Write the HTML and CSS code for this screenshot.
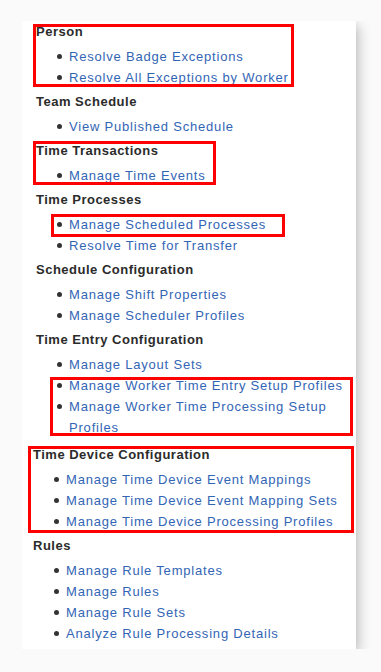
FILE: index.html
```html
<!DOCTYPE html>
<html lang="en">
<head>
<meta charset="utf-8">
<title>Time and Labor Tasks</title>
<link rel="stylesheet" href="styles.css">
</head>
<body>
<div class="card">
  <section class="grp box box-person">
    <h3 class="hd">Person</h3>
    <ul class="items">
      <li><a href="#">Resolve Badge Exceptions</a></li>
      <li><a href="#">Resolve All Exceptions by Worker</a></li>
    </ul>
  </section>
  <section class="grp">
    <h3 class="hd">Team Schedule</h3>
    <ul class="items">
      <li><a href="#">View Published Schedule</a></li>
    </ul>
  </section>
  <section class="grp box box-trans">
    <h3 class="hd">Time Transactions</h3>
    <ul class="items">
      <li><a href="#">Manage Time Events</a></li>
    </ul>
  </section>
  <section class="grp">
    <h3 class="hd">Time Processes</h3>
    <ul class="items">
      <li class="box box-sched"><a href="#">Manage Scheduled Processes</a></li>
      <li><a href="#">Resolve Time for Transfer</a></li>
    </ul>
  </section>
  <section class="grp">
    <h3 class="hd">Schedule Configuration</h3>
    <ul class="items">
      <li><a href="#">Manage Shift Properties</a></li>
      <li><a href="#">Manage Scheduler Profiles</a></li>
    </ul>
  </section>
  <section class="grp">
    <h3 class="hd">Time Entry Configuration</h3>
    <ul class="items">
      <li><a href="#">Manage Layout Sets</a></li>
      <li class="box box-worker"><a href="#">Manage Worker Time Entry Setup Profiles</a></li>
      <li><a href="#">Manage Worker Time Processing Setup Profiles</a></li>
    </ul>
  </section>
  <section class="grp shift gap box box-device">
    <h3 class="hd">Time Device Configuration</h3>
    <ul class="items">
      <li><a href="#">Manage Time Device Event Mappings</a></li>
      <li><a href="#">Manage Time Device Event Mapping Sets</a></li>
      <li><a href="#">Manage Time Device Processing Profiles</a></li>
    </ul>
  </section>
  <section class="grp shift last">
    <h3 class="hd">Rules</h3>
    <ul class="items">
      <li><a href="#">Manage Rule Templates</a></li>
      <li><a href="#">Manage Rules</a></li>
      <li><a href="#">Manage Rule Sets</a></li>
      <li><a href="#">Analyze Rule Processing Details</a></li>
    </ul>
  </section>
</div>
</body>
</html>
```

FILE: styles.css
```css
html, body {
  background: #fafafa;
}
body {
  margin: 21px 0 0 22px;
  font-family: "Liberation Sans", Arial, sans-serif;
  font-size: 13px;
}
.card {
  width: 334px;
  background: #ffffff;
  padding: 0 0 5px;
  box-shadow: 3px 5px 12px rgba(0, 0, 0, 0.22), 0 0 6px rgba(0, 0, 0, 0.06);
}
.grp {
  position: relative;
  padding-bottom: 3px;
}
.grp.last {
  padding-bottom: 0;
}
.grp.gap {
  margin-top: 3px;
}
.hd {
  margin: 0;
  padding-left: 14px;
  font-size: 13px;
  font-weight: bold;
  line-height: 21px;
  letter-spacing: 0.5px;
  color: #2b2b2b;
}
.items {
  list-style: none;
  margin: 4px 0 0;
  padding: 0;
}
.items li {
  position: relative;
  padding-left: 47px;
  line-height: 21px;
  letter-spacing: 0.8px;
}
.items li::before {
  content: "";
  position: absolute;
  left: 35px;
  top: 8px;
  width: 5px;
  height: 5px;
  border-radius: 50%;
  background: #333333;
}
.items a {
  color: #3365b5;
  text-decoration: none;
}
.shift .hd {
  padding-left: 11px;
}
.shift .items li {
  padding-left: 44px;
}
.shift .items li::before {
  left: 32px;
}
.box::after {
  content: "";
  position: absolute;
  box-sizing: border-box;
  border: 3px solid #ff0000;
  pointer-events: none;
}
.box-person::after {
  left: 11px;
  top: 3px;
  width: 261px;
  height: 63px;
}
.box-trans::after {
  left: 11px;
  top: 1px;
  width: 183px;
  height: 44px;
}
.box-sched::after {
  left: 29px;
  top: 0;
  width: 234px;
  height: 23px;
}
.box-worker::after {
  left: 28px;
  top: 2px;
  width: 303px;
  height: 59px;
}
.box-device::after {
  left: 6px;
  top: 2px;
  width: 326px;
  height: 87px;
}
```
